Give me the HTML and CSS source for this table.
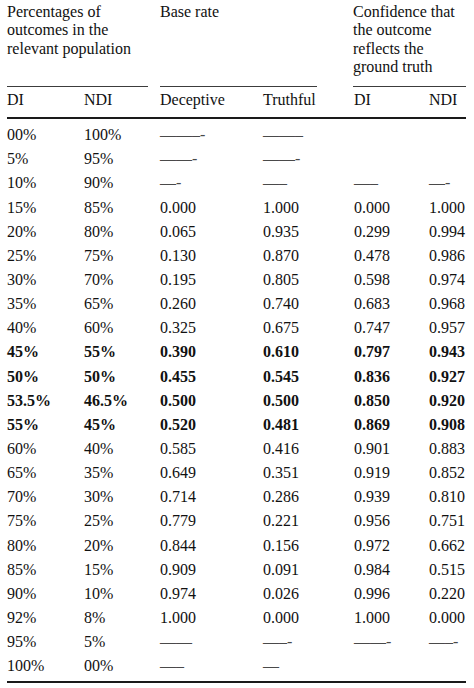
FILE: index.html
```html
<!DOCTYPE html>
<html lang="en">
<head>
<meta charset="utf-8">
<title>Base rate table</title>
<link rel="stylesheet" href="styles.css">
</head>
<body>
<div class="tbl">
  <div class="groups">
    <div class="group g-pop">Percentages of<br>outcomes in the<br>relevant population</div>
    <div class="group g-base">Base rate</div>
    <div class="group g-conf">Confidence that<br>the outcome<br>reflects the<br>ground truth</div>
  </div>
  <div class="row subhead">
    <span>DI</span><span>NDI</span><span>Deceptive</span><span>Truthful</span><span>DI</span><span>NDI</span>
  </div>
  <div class="body">
    <div class="row"><span>00%</span><span>100%</span><span class="dash">——–-</span><span class="dash">——–</span><span></span><span></span></div>
    <div class="row"><span>5%</span><span>95%</span><span class="dash">——-</span><span class="dash">——-</span><span></span><span></span></div>
    <div class="row"><span>10%</span><span>90%</span><span class="dash">—-</span><span class="dash">—–</span><span class="dash">—–</span><span class="dash">—-</span></div>
    <div class="row"><span>15%</span><span>85%</span><span>0.000</span><span>1.000</span><span>0.000</span><span>1.000</span></div>
    <div class="row"><span>20%</span><span>80%</span><span>0.065</span><span>0.935</span><span>0.299</span><span>0.994</span></div>
    <div class="row"><span>25%</span><span>75%</span><span>0.130</span><span>0.870</span><span>0.478</span><span>0.986</span></div>
    <div class="row"><span>30%</span><span>70%</span><span>0.195</span><span>0.805</span><span>0.598</span><span>0.974</span></div>
    <div class="row"><span>35%</span><span>65%</span><span>0.260</span><span>0.740</span><span>0.683</span><span>0.968</span></div>
    <div class="row"><span>40%</span><span>60%</span><span>0.325</span><span>0.675</span><span>0.747</span><span>0.957</span></div>
    <div class="row bold"><span>45%</span><span>55%</span><span>0.390</span><span>0.610</span><span>0.797</span><span>0.943</span></div>
    <div class="row bold"><span>50%</span><span>50%</span><span>0.455</span><span>0.545</span><span>0.836</span><span>0.927</span></div>
    <div class="row bold"><span>53.5%</span><span>46.5%</span><span>0.500</span><span>0.500</span><span>0.850</span><span>0.920</span></div>
    <div class="row bold"><span>55%</span><span>45%</span><span>0.520</span><span>0.481</span><span>0.869</span><span>0.908</span></div>
    <div class="row"><span>60%</span><span>40%</span><span>0.585</span><span>0.416</span><span>0.901</span><span>0.883</span></div>
    <div class="row"><span>65%</span><span>35%</span><span>0.649</span><span>0.351</span><span>0.919</span><span>0.852</span></div>
    <div class="row"><span>70%</span><span>30%</span><span>0.714</span><span>0.286</span><span>0.939</span><span>0.810</span></div>
    <div class="row"><span>75%</span><span>25%</span><span>0.779</span><span>0.221</span><span>0.956</span><span>0.751</span></div>
    <div class="row"><span>80%</span><span>20%</span><span>0.844</span><span>0.156</span><span>0.972</span><span>0.662</span></div>
    <div class="row"><span>85%</span><span>15%</span><span>0.909</span><span>0.091</span><span>0.984</span><span>0.515</span></div>
    <div class="row"><span>90%</span><span>10%</span><span>0.974</span><span>0.026</span><span>0.996</span><span>0.220</span></div>
    <div class="row"><span>92%</span><span>8%</span><span>1.000</span><span>0.000</span><span>1.000</span><span>0.000</span></div>
    <div class="row"><span>95%</span><span>5%</span><span class="dash">——</span><span class="dash">—–-</span><span class="dash">——-</span><span class="dash">—–-</span></div>
    <div class="row"><span>100%</span><span>00%</span><span class="dash">—–</span><span class="dash">—</span><span></span><span></span></div>
  </div>
</div>
</body>
</html>
```

FILE: styles.css
```css
html, body {
  margin: 0;
  padding: 0;
  background: #ffffff;
}

body {
  font-family: "Liberation Serif", "Times New Roman", serif;
  font-size: 16px;
  color: #111111;
}

.tbl {
  width: 459px;
  margin-left: 7px;
}

.groups,
.row {
  display: grid;
  grid-template-columns: 77px 76px 103px 91px 75px 37px;
}

.groups {
  line-height: 18.5px;
}

.group {
  padding: 2.6px 0 9.4px 0;
  border-bottom: 1px solid #3c3c3c;
}

.g-pop {
  grid-column: 1 / span 2;
  margin-right: 12px;
}

.g-base {
  grid-column: 3 / span 2;
  margin-right: 37px;
}

.g-conf {
  grid-column: 5 / span 2;
  margin-left: -1px;
}

.subhead {
  line-height: 18.5px;
  padding: 4.3px 0 7.2px 0;
  border-bottom: 2px solid #1a1a1a;
}

.body {
  padding-top: 4.2px;
  padding-bottom: 2.6px;
  border-bottom: 2px solid #1a1a1a;
}

.body .row {
  line-height: 24.14px;
  white-space: nowrap;
}

.bold {
  font-weight: bold;
}

.dash {
  color: #4a4a4a;
}
```
